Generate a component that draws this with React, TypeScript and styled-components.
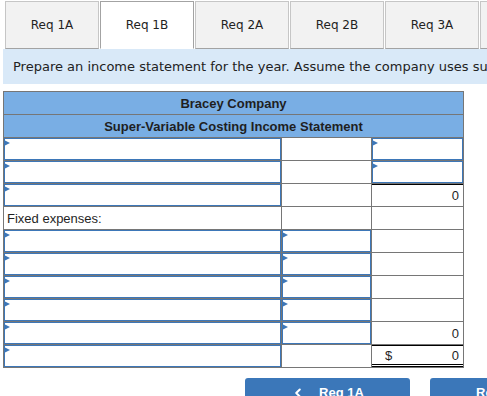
import React from 'react';
import styled, { createGlobalStyle, css } from 'styled-components';
import { ChevronLeft, ChevronRight } from 'lucide-react';

const GlobalStyle = createGlobalStyle`
  html, body {
    margin: 0;
    padding: 0;
    background: #ffffff;
    overflow: hidden;
  }
  body {
    font-family: "Liberation Sans", Arial, sans-serif;
  }
`;

const Page = styled.div`
  width: 487px;
  height: 396px;
  overflow: hidden;
  padding-top: 1px;
  box-sizing: border-box;
`;

const TabBar = styled.div`
  display: flex;
  gap: 1px;
  padding-left: 5px;
  white-space: nowrap;
`;

const Tab = styled.div<{ $active?: boolean }>`
  flex: 0 0 94px;
  height: 48px;
  box-sizing: border-box;
  display: flex;
  align-items: center;
  justify-content: center;
  font-family: "DejaVu Sans", Verdana, sans-serif;
  font-size: 12px;
  color: #222222;
  background: #f2f2f2;
  border: 1px solid #c6c6c6;
  border-bottom-color: #a3a3a3;

  ${({ $active }) =>
    $active &&
    css`
      background: #ffffff;
      border-color: #a3a3a3;
      border-bottom: 1px solid #ffffff;
    `}
`;

const Prompt = styled.div`
  margin-left: 3px;
  height: 35px;
  display: flex;
  align-items: center;
  padding-left: 10px;
  background: #d9e9f8;
  font-family: "DejaVu Sans", Verdana, sans-serif;
  font-size: 13px;
  color: #222222;
  white-space: nowrap;
  overflow: hidden;
`;

const Sheet = styled.div`
  margin: 7px 0 0 3px;
  width: 461px;
  display: grid;
  grid-template-columns: 277px 89px 91px;
  grid-auto-rows: 22px;
  gap: 1px;
  padding: 1px;
  box-sizing: border-box;
  background: #767676;
`;

const HeadCell = styled.div`
  grid-column: 1 / -1;
  display: flex;
  align-items: center;
  justify-content: center;
  background: #79aee4;
  font-size: 13px;
  font-weight: bold;
  color: #1f1f1f;
`;

const Cell = styled.div<{ $topLine?: boolean; $double?: boolean }>`
  position: relative;
  background: #ffffff;
  box-sizing: border-box;
  display: flex;
  align-items: center;
  font-size: 13px;
  color: #1f1f1f;
  border-top: ${({ $topLine }) => ($topLine ? '1px solid #000000' : 'none')};
  border-bottom: ${({ $double }) => ($double ? '3px double #000000' : 'none')};
`;

const Label = styled.span`
  padding-left: 3px;
`;

const Amount = styled.div`
  flex: 1;
  display: flex;
  justify-content: space-between;
  padding: 0 4px 0 13px;
`;

const InputBox = styled.div`
  position: relative;
  width: 100%;
  height: 100%;
  box-sizing: border-box;
  border: 1px solid #3d77b8;

  &::before {
    content: '';
    position: absolute;
    left: -1px;
    top: 1px;
    width: 0;
    height: 0;
    border-left: 6px solid #3d77b8;
    border-top: 3.5px solid transparent;
    border-bottom: 3.5px solid transparent;
  }
`;

const Nav = styled.div`
  display: flex;
  gap: 20px;
  margin: 10px 0 0 245px;
`;

const NavButton = styled.div`
  flex: 0 0 165px;
  height: 40px;
  box-sizing: border-box;
  display: flex;
  align-items: flex-start;
  justify-content: center;
  gap: 14px;
  padding-top: 6px;
  border-radius: 3px;
  background: #3b77b9;
  color: #ffffff;
  font-size: 13px;
  font-weight: bold;
  line-height: 18px;

  svg {
    margin-top: 2px;
  }
`;

type Kind = 'input' | 'plain' | 'label' | 'value';
type CellDef = { kind: Kind; text?: string; dollar?: boolean; topLine?: boolean; double?: boolean };

const i: CellDef = { kind: 'input' };
const p: CellDef = { kind: 'plain' };

const rows: CellDef[][] = [
  [i, p, i],
  [i, p, i],
  [i, p, { kind: 'value', text: '0', topLine: true }],
  [{ kind: 'label', text: 'Fixed expenses:' }, p, p],
  [i, i, p],
  [i, i, p],
  [i, i, p],
  [i, i, p],
  [i, i, { kind: 'value', text: '0' }],
  [i, p, { kind: 'value', text: '0', dollar: true, topLine: true, double: true }],
];

const tabs = ['Req 1A', 'Req 1B', 'Req 2A', 'Req 2B', 'Req 3A', 'Req 3B'];

const renderCell = (c: CellDef, key: string) => (
  <Cell key={key} $topLine={c.topLine} $double={c.double}>
    {c.kind === 'input' && <InputBox />}
    {c.kind === 'label' && <Label>{c.text}</Label>}
    {c.kind === 'value' && (
      <Amount>
        <span>{c.dollar ? '$' : ''}</span>
        <span>{c.text}</span>
      </Amount>
    )}
  </Cell>
);

const App: React.FC = () => {
  return (
    <Page>
      <GlobalStyle />
      <TabBar>
        {tabs.map((t) => (
          <Tab key={t} $active={t === 'Req 1B'}>
            {t}
          </Tab>
        ))}
      </TabBar>

      <Prompt>Prepare an income statement for the year. Assume the company uses super-variable costing.</Prompt>

      <Sheet>
        <HeadCell>Bracey Company</HeadCell>
        <HeadCell>Super-Variable Costing Income Statement</HeadCell>
        {rows.map((r, ri) => r.map((c, ci) => renderCell(c, `${ri}-${ci}`)))}
      </Sheet>

      <Nav>
        <NavButton>
          <ChevronLeft size={14} strokeWidth={3.5} />
          <span>Req 1A</span>
        </NavButton>
        <NavButton>
          <span>Req 2A</span>
          <ChevronRight size={14} strokeWidth={3.5} />
        </NavButton>
      </Nav>
    </Page>
  );
};

export default App;
